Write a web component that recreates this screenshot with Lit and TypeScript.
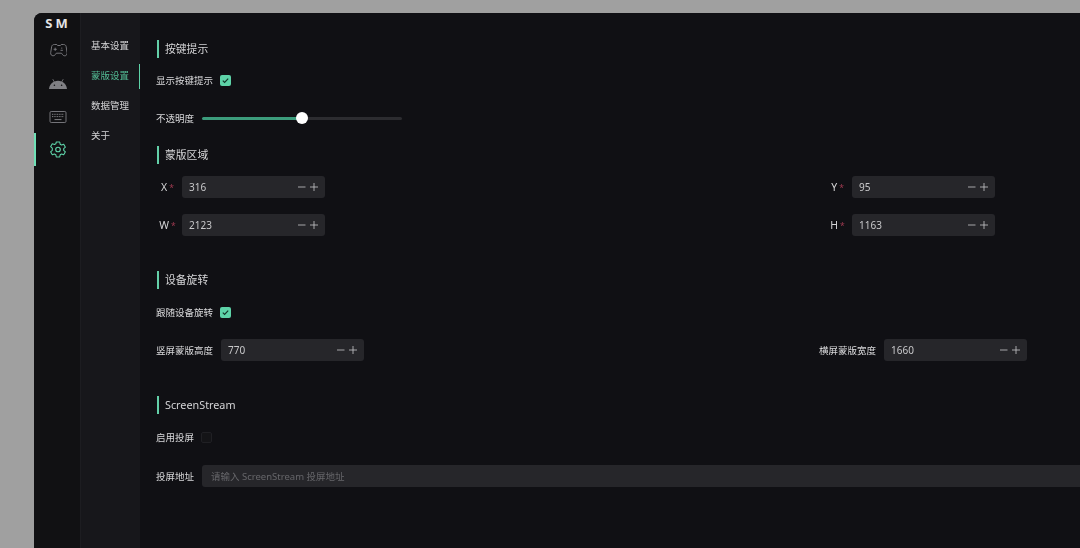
import { LitElement, html, css, svg } from "lit";
import { customElement } from "lit/decorators.js";

const icons = {
  game: svg`<path d="M5.400 2.500h2.400l.8 1h2.800l.8-1h2.400c1.300 0 2.200.7 2.500 1.900l1 6.300c.3 1.800-.9 3.100-2.400 3.100-.9 0-1.600-.4-2.100-1.100l-1.100-1.500H7.300l-1.100 1.500c-.5.7-1.200 1.100-2.100 1.100-1.500 0-2.700-1.300-2.400-3.100l1-6.300C3 3.200 4 2.500 5.400 2.500z" fill="none" stroke="currentColor" stroke-width=".9"/><path d="M4.600 7.300h3.200M6.200 5.700v3.200M11.500 8.300h2.400" fill="none" stroke="currentColor" stroke-width=".9"/><circle cx="12.800" cy="6.100" r=".6" fill="currentColor"/>`,
  android: svg`<path d="M0 14c.2-3.300 2-5.800 4.800-7.200L3.400 4.300l.6-.4 1.500 2.500c1.100-.4 2.300-.7 3.500-.7s2.400.3 3.500.7L14 3.900l.6.4-1.400 2.500C16 8.200 17.800 10.700 18 14z" fill="currentColor"/><circle cx="5.400" cy="10.300" r=".8" fill="#111113"/><circle cx="12.600" cy="10.300" r=".8" fill="#111113"/>`,
  keys: svg`<rect x="1" y="3.500" width="16" height="11" rx="1.200" fill="none" stroke="currentColor" stroke-width=".9"/><path d="M3 6.300h12M3 8.600h12" stroke="currentColor" stroke-width="1" stroke-dasharray="1 .7" fill="none"/><path d="M5.500 11.600h7" stroke="currentColor" stroke-width="1" fill="none"/>`,
  gear: svg`<path d="M7.300 1h3.400l.5 2.300 1.300.7 2.200-.8 1.700 3-1.700 1.500v1.600l1.700 1.500-1.700 3-2.200-.8-1.300.7-.5 2.300H7.300l-.5-2.300-1.300-.7-2.200.8-1.700-3 1.700-1.500V7.200L1.600 5.700l1.700-3 2.200.8 1.300-.7z" fill="none" stroke="currentColor" stroke-width="1.100" stroke-linejoin="round"/><circle cx="9" cy="8.500" r="2.300" fill="none" stroke="currentColor" stroke-width="1.100"/>`,
};

@customElement("app-root")
export class AppRoot extends LitElement {
  static styles = css`
    :host {
      display: block;
      height: 548px;
      width: 1080px;
      overflow: hidden;
      background: #a0a0a0;
      padding: 13px 0 0 34px;
      box-sizing: border-box;
      font-family: "Noto Sans", "Noto Sans CJK SC", sans-serif;
      color: #d8d8da;
      font-size: 9.5px;
    }
    .window {
      display: flex;
      width: 1100px;
      height: 535px;
      border-radius: 8px 0 0 0;
      overflow: hidden;
      background: #101014;
      filter: blur(0.4px);
    }
    .rail {
      width: 46px;
      flex: none;
      background: #111113;
      border-right: 1px solid #1d1d21;
      display: flex;
      flex-direction: column;
      align-items: center;
    }
    .logo {
      height: 21px;
      line-height: 21px;
      font-size: 13px;
      font-weight: 700;
      letter-spacing: 3px;
      color: #e4e4e4;
      margin-left: 2px;
    }
    .rail-item {
      width: 100%;
      height: 33px;
      display: flex;
      align-items: center;
      justify-content: center;
      color: #808084;
      box-sizing: border-box;
      margin-left: 2px;
    }
    .rail-item svg { width: 18px; height: 18px; }
    .rail-item.on { color: #5ed3a8; position: relative; }
    .rail-item.on::before {
      content: "";
      position: absolute;
      left: -1px;
      top: 0;
      width: 2px;
      height: 100%;
      background: #6fe0b6;
    }
    .menu {
      width: 59px;
      flex: none;
      background: #17171b;
      padding-top: 18px;
      display: flex;
      flex-direction: column;
    }
    .menu-item {
      height: 30px;
      line-height: 30px;
      padding-left: 10px;
      color: #d4d4d6;
      box-sizing: border-box;
    }
    .menu-item.on {
      color: #52b993;
      position: relative;
    }
    .menu-item.on::after {
      content: "";
      position: absolute;
      right: 0;
      top: 3px;
      width: 1px;
      height: 25px;
      background: #5ed3a8;
    }
    .content {
      flex: 1;
      padding: 27px 0 0 16px;
      min-width: 0;
    }
    .title {
      height: 18px;
      line-height: 18px;
      border-left: 2px solid #63cfa8;
      margin-left: 1px;
      padding-left: 6px;
      font-size: 10.800px;
      color: #d4d4d6;
      margin-bottom: 12px;
    }
    .title.first { margin-bottom: 11px; }
    .section { margin-bottom: 35px; }
    .section.tight { margin-bottom: 17px; }
    .row {
      display: flex;
      align-items: center;
      height: 22px;
      margin-bottom: 16px;
    }
    .row.gap17 { margin-bottom: 17px; }
    .row:last-child { margin-bottom: 0; }
    .check {
      width: 11px;
      height: 11px;
      margin-left: 7px;
      border-radius: 2px;
      background: #5ed3a8;
      display: flex;
      align-items: center;
      justify-content: center;
    }
    .check svg { width: 9px; height: 9px; }
    .check.off {
      background: #141417;
      border: 1px solid #202024;
      box-sizing: border-box;
    }
    .slider {
      display: flex;
      align-items: center;
      width: 200px;
      margin-left: 8px;
    }
    .fill { width: 100px; height: 3px; background: #3c9c7c; border-radius: 2px 0 0 2px; }
    .rest { flex: 1; height: 3px; background: #2c2c30; border-radius: 0 2px 2px 0; }
    .thumb {
      width: 12px;
      height: 12px;
      flex: none;
      background: #fff;
      border-radius: 50%;
      margin: 0 -6px;
      z-index: 1;
    }
    .cell { display: flex; align-items: center; flex: none; }
    .xy { width: 670px; }
    .wide { width: 663px; }
    .label { width: 26px; display: flex; justify-content: center; align-items: center; gap: 2px; flex: none; color: #d4d4d6; padding-right: 3px; box-sizing: border-box; font-size: 10.500px; }
    .label i { font-style: normal; color: #a03a50; font-size: 8.500px; }
    .label-long { width: 57px; margin-right: 8px; flex: none; }
    .label-mid { width: 38px; margin-right: 8px; flex: none; }
    .num {
      width: 143px;
      height: 22px;
      flex: none;
      background: #26262a;
      border-radius: 3px;
      display: flex;
      align-items: center;
      padding: 0 7px;
      box-sizing: border-box;
      color: #c8c8ca;
      font-size: 10px;
    }
    .num span { flex: 1; }
    .num svg { width: 20px; height: 10px; color: #c8c8ca; }
    .text {
      flex: 1;
      height: 22px;
      background: #26262a;
      border-radius: 3px;
      display: flex;
      align-items: center;
      padding: 0 9px;
      color: #66666a;
      font-size: 9.500px;
      margin-right: -60px;
    }
  `;

  private check(on = true) {
    if (!on) return html`<span class="check off"></span>`;
    return html`<span class="check"><svg viewBox="0 0 10 10"><path d="M2 5.200l2 2 4-4.200" fill="none" stroke="#14352a" stroke-width="1.300"/></svg></span>`;
  }

  private num(v: string) {
    return html`<div class="num"><span>${v}</span><svg viewBox="0 0 20 10"><path d="M0 5h7.500M12 5h8M16 1v8" fill="none" stroke="currentColor" stroke-width=".8"/></svg></div>`;
  }

  private field(k: string, v: string, cls = "") {
    return html`<div class="cell ${cls}"><span class="label">${k}<i>*</i></span>${this.num(v)}</div>`;
  }

  render() {
    return html`
      <div class="window">
        <div class="rail">
          <div class="logo">SM</div>
          <div class="rail-item"><svg viewBox="0 0 18 18">${icons.game}</svg></div>
          <div class="rail-item"><svg viewBox="0 0 18 18">${icons.android}</svg></div>
          <div class="rail-item"><svg viewBox="0 0 18 18">${icons.keys}</svg></div>
          <div class="rail-item on"><svg viewBox="0 0 18 18">${icons.gear}</svg></div>
        </div>
        <div class="menu">
          <div class="menu-item">基本设置</div>
          <div class="menu-item on">蒙版设置</div>
          <div class="menu-item">数据管理</div>
          <div class="menu-item">关于</div>
        </div>
        <div class="content">
          <div class="section tight">
            <div class="title first">按键提示</div>
            <div class="row">显示按键提示${this.check()}</div>
            <div class="row">
              不透明度
              <div class="slider"><div class="fill"></div><div class="thumb"></div><div class="rest"></div></div>
            </div>
          </div>
          <div class="section">
            <div class="title">蒙版区域</div>
            <div class="row">${this.field("X", "316", "xy")}${this.field("Y", "95")}</div>
            <div class="row">${this.field("W", "2123", "xy")}${this.field("H", "1163")}</div>
          </div>
          <div class="section">
            <div class="title">设备旋转</div>
            <div class="row">跟随设备旋转${this.check()}</div>
            <div class="row">
              <div class="cell wide"><span class="label-long">竖屏蒙版高度</span>${this.num("770")}</div>
              <div class="cell"><span class="label-long">横屏蒙版宽度</span>${this.num("1660")}</div>
            </div>
          </div>
          <div class="section">
            <div class="title">ScreenStream</div>
            <div class="row gap17">启用投屏${this.check(false)}</div>
            <div class="row">
              <span class="label-mid">投屏地址</span>
              <div class="text">请输入 ScreenStream 投屏地址</div>
            </div>
          </div>
        </div>
      </div>
    `;
  }
}
